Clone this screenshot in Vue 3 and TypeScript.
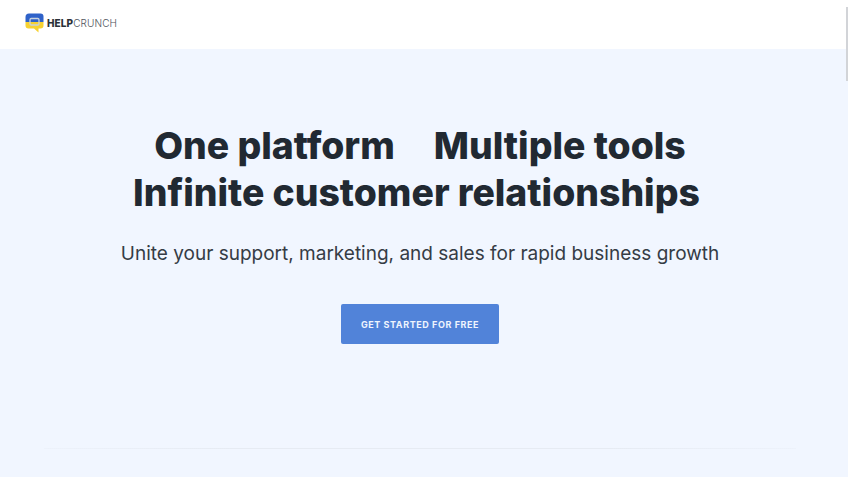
<script setup lang="ts">
const headline = ['One platform', 'Multiple tools']
</script>

<template>
  <div class="page">
    <header class="topbar">
      <a class="logo" href="#">
        <svg width="19" height="20" viewBox="0 0 19 20" aria-hidden="true">
          <path d="M4 0.5H15.5A3 3 0 0 1 18.5 3.5V9H0.5V4A3.5 3.5 0 0 1 4 0.5Z" fill="#2f62c9" />
          <path d="M0.5 9H18.5V12.5A3 3 0 0 1 15.5 15.5H13.5V19.5L9 15.5H3.5A3 3 0 0 1 0.5 12.5Z" fill="#f7d232" />
          <rect x="5" y="5.5" width="9" height="6.5" rx="1.2" fill="none" stroke="#c9d3dd" stroke-width="1.3" />
        </svg>
        <span class="logo-text"><b>HELP</b>CRUNCH</span>
      </a>
    </header>

    <main class="hero">
      <h1>
        <span class="line">
          <span v-for="part in headline" :key="part" class="part">{{ part }}</span>
        </span>
        <span class="line second">Infinite customer relationships</span>
      </h1>
      <p class="sub">Unite your support, marketing, and sales for rapid business growth</p>
      <a class="cta" href="#">GET STARTED FOR FREE</a>
      <div class="divider"></div>
    </main>

    <div class="scroll-thumb"></div>
  </div>
</template>

<style>
html,
body {
  margin: 0;
  overflow: hidden;
}
</style>

<style scoped>
.page {
  position: relative;
  width: 848px;
  height: 477px;
  overflow: hidden;
  background: #f1f6ff;
  font-family: Inter, "Liberation Sans", sans-serif;
}

.topbar {
  display: flex;
  align-items: center;
  height: 49px;
  padding: 0 0 4px 25px;
  box-sizing: border-box;
  background: #fff;
}

.logo {
  display: flex;
  align-items: center;
  gap: 3px;
  text-decoration: none;
}

.logo-text {
  font-size: 10px;
  font-weight: 300;
  letter-spacing: 0.1px;
  color: #4e545c;
}

.logo-text b {
  font-weight: 800;
  color: #2b3138;
}

.hero {
  display: flex;
  flex-direction: column;
  align-items: center;
  width: 840px;
  padding-top: 73px;
}

h1 {
  margin: 0;
  display: flex;
  flex-direction: column;
  align-items: center;
  font-size: 37.33px;
  line-height: 47px;
  font-weight: 800;
  color: #212932;
}

.line {
  display: flex;
  gap: 39px;
}

.line.second {
  padding-right: 7px;
}

.sub {
  margin: 24px 0 0;
  font-size: 19px;
  line-height: 28px;
  color: #353c45;
}

.cta {
  display: flex;
  align-items: center;
  justify-content: center;
  width: 158px;
  height: 40px;
  margin-top: 36px;
  border-radius: 2px;
  background: #5183d9;
  color: #eef4fe;
  font-size: 9px;
  font-weight: 700;
  letter-spacing: 0.58px;
  text-decoration: none;
}

.divider {
  width: 752px;
  height: 1px;
  margin-top: 104px;
  background: linear-gradient(90deg, #edf2fb, #e6ebf3 25%, #e6ebf3 75%, #edf2fb);
}

.scroll-thumb {
  position: absolute;
  top: 7px;
  right: 0;
  width: 2px;
  height: 74px;
  background: #d2d4d8;
}
</style>
